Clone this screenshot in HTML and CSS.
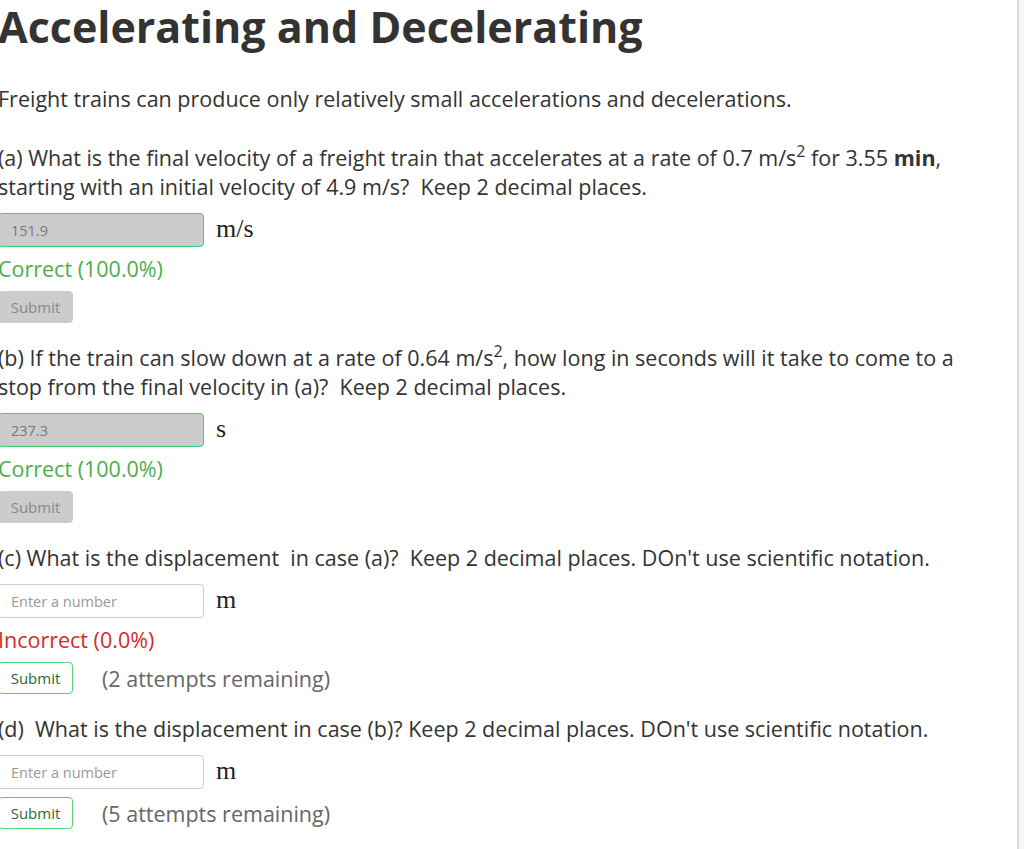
FILE: index.html
```html
<!DOCTYPE html>
<html>
<head>
<meta charset="utf-8">
<link rel="stylesheet" href="styles.css">
</head>
<body>
<div class="page">
  <main class="content">
    <h1 class="title">Accelerating and Decelerating</h1>
    <p class="intro">Freight trains can produce only relatively small accelerations and decelerations.</p>

    <section class="part part-first">
      <p class="question">(a) What is the final velocity of a freight train that accelerates at a rate of 0.7 m/s<sup>2</sup> for 3.55 <b>min</b>, starting with an initial velocity of 4.9 m/s?&nbsp; Keep 2 decimal places.</p>
      <div class="answer-row">
        <input class="answer answer-done" type="text" value="151.9" disabled>
        <span class="unit">m/s</span>
      </div>
      <div class="feedback correct">Correct (100.0%)</div>
      <div class="submit-row"><button class="submit submit-disabled" disabled>Submit</button></div>
    </section>

    <section class="part">
      <p class="question">(b) If the train can slow down at a rate of 0.64 m/s<sup>2</sup>, how long in seconds will it take to come to a stop from the final velocity in (a)?&nbsp; Keep 2 decimal places.</p>
      <div class="answer-row">
        <input class="answer answer-done" type="text" value="237.3" disabled>
        <span class="unit">s</span>
      </div>
      <div class="feedback correct">Correct (100.0%)</div>
      <div class="submit-row"><button class="submit submit-disabled" disabled>Submit</button></div>
    </section>

    <section class="part">
      <p class="question">(c) What is the displacement&nbsp; in case (a)?&nbsp; Keep 2 decimal places. DOn't use scientific notation.</p>
      <div class="answer-row">
        <input class="answer" type="text" placeholder="Enter a number">
        <span class="unit">m</span>
      </div>
      <div class="feedback incorrect">Incorrect (0.0%)</div>
      <div class="submit-row"><button class="submit">Submit</button><span class="attempts">(2 attempts remaining)</span></div>
    </section>

    <section class="part">
      <p class="question">(d)&nbsp; What is the displacement in case (b)? Keep 2 decimal places. DOn't use scientific notation.</p>
      <div class="answer-row">
        <input class="answer" type="text" placeholder="Enter a number">
        <span class="unit">m</span>
      </div>
      <div class="submit-row"><button class="submit">Submit</button><span class="attempts">(5 attempts remaining)</span></div>
    </section>
  </main>
  <aside class="side"></aside>
</div>
</body>
</html>
```

FILE: styles.css
```css
html, body {
  margin: 0;
  padding: 0;
  background: #fff;
}
body {
  font-family: "Open Sans", "DejaVu Sans", sans-serif;
  color: #333;
  overflow: hidden;
}
.page {
  display: flex;
  height: 849px;
}
.content {
  box-sizing: border-box;
  width: 1019px;
  margin-left: -2px;
  padding-right: 19px;
  flex: none;
}
.side {
  flex: 1;
  background: #f8f8f8;
  border-left: 2px solid #dcdcdc;
}
.title {
  font-size: 43px;
  font-weight: 700;
  line-height: 52px;
  margin: 0;
  padding-top: 1px;
  color: #333;
}
.intro {
  font-size: 21.5px;
  line-height: 29px;
  margin: 31px 0 0 0;
}
.part {
  margin-top: 20px;
}
.part-first {
  margin-top: 30px;
}
.question {
  font-size: 21.5px;
  line-height: 29px;
  margin: 0;
}
.question sup {
  font-size: 16px;
  line-height: 0;
  vertical-align: 9px;
}
.answer-row {
  display: flex;
  align-items: center;
  gap: 12px;
  margin-top: 12px;
}
.answer {
  box-sizing: border-box;
  width: 206px;
  height: 34px;
  border: 1px solid #ccc;
  border-radius: 4px;
  padding: 0 12px;
  font-family: "Open Sans", sans-serif;
  font-size: 14.5px;
  color: #555;
  background: #fff;
  outline: none;
}
.answer::placeholder {
  color: #999;
}
.answer-done {
  background: #ccc;
  border-color: #3fd06e;
  color: #777;
  -webkit-text-fill-color: #777;
  opacity: 1;
}
.unit {
  font-family: "Liberation Serif", "Times New Roman", serif;
  font-size: 26px;
  color: #222;
  line-height: 28px;
  margin-top: -3px;
}
.feedback {
  font-size: 21.5px;
  line-height: 28px;
  margin-top: 8px;
}
.correct { color: #4cae4c; }
.incorrect { color: #d42a2a; }
.submit-row {
  display: flex;
  align-items: center;
  gap: 29px;
  margin-top: 8px;
}
.submit {
  box-sizing: border-box;
  height: 32px;
  width: 75px;
  padding: 0 10px;
  border-radius: 4px;
  font-family: "Open Sans", sans-serif;
  font-size: 15px;
  background: #fff;
  border: 1px solid #4fd37c;
  color: #1f6b36;
}
.submit-disabled {
  background: #ccc;
  border-color: #ccc;
  color: #888;
}
.attempts {
  font-size: 21.5px;
  color: #666;
}
```
